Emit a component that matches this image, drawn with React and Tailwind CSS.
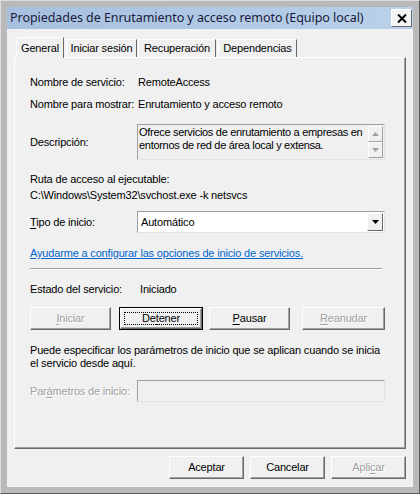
import React from 'react';

const font = { fontFamily: '"Liberation Sans", Arial, sans-serif' };

// classic raised 3D button
function Btn({ children, disabled, focused, className = '' }) {
  const face = (
    <div className="h-full w-full border border-t-white border-l-white border-r-[#696969] border-b-[#696969] shadow-[inset_-1px_-1px_0_#a0a0a0] bg-[#f0f0f0] flex items-center justify-center">
      {focused ? (
        <div className="h-[calc(100%-6px)] w-[calc(100%-6px)] border border-dotted border-black flex items-center justify-center">
          {children}
        </div>
      ) : (
        children
      )}
    </div>
  );
  return (
    <div
      className={`h-[23px] shrink-0 ${focused ? 'border border-black' : ''} ${
        disabled ? 'text-[#a0a0a0] [text-shadow:1px_1px_0_#fff]' : 'text-black'
      } ${className}`}
    >
      {face}
    </div>
  );
}

function U({ children }) {
  return <span className="underline underline-offset-2">{children}</span>;
}

function Arrow({ up, color = '#a0a0a0' }) {
  return (
    <svg width="7" height="4" viewBox="0 0 7 4">
      <path d={up ? 'M0 4 L3.5 0 L7 4 Z' : 'M0 0 L7 0 L3.5 4 Z'} fill={color} />
    </svg>
  );
}

function Row({ label, children, className = '' }) {
  return (
    <div className={`flex items-center ${className}`}>
      <div className="w-[107px] shrink-0 whitespace-nowrap">{label}</div>
      <div className="flex-1 min-w-0">{children}</div>
    </div>
  );
}

export default function App() {
  const tabs = [
    ['Iniciar sesión', 'w-[71px] ml-[2px]'],
    ['Recuperación', 'w-[78px] ml-[1px]'],
    ['Dependencias', 'w-[79px] ml-[2px]'],
  ];
  return (
    <div style={font} className="w-[420px] h-[494px] text-[11px] tracking-[-0.17px] text-black bg-[#b9b9b9] border border-t-[#dcdcdc] border-l-[#dcdcdc] border-r-[#5a5a5a] border-b-[#5a5a5a] p-[6px] flex flex-col">
      {/* title bar */}
      <div className="h-[22px] shrink-0 bg-gradient-to-r from-[#a7c0df] to-[#b9d1ea] flex items-center justify-between pl-[3px] pr-[1px]">
        <span style={{ fontFamily: '"Noto Sans", "Open Sans", sans-serif' }} className="text-[12.5px] text-[#1a1a3a] tracking-[-0.05px]">
          Propiedades de Enrutamiento y acceso remoto (Equipo local)
        </span>
        <div className="w-[21px] h-[18px] bg-[#f4f4f4] border border-t-white border-l-white border-r-[#696969] border-b-[#696969] flex items-center justify-center">
          <svg width="10" height="9" viewBox="0 0 10 9">
            <path d="M1 0.5 L9 8.5 M9 0.5 L1 8.5" stroke="#000" strokeWidth="2" />
          </svg>
        </div>
      </div>

      {/* client area */}
      <div className="flex-1 bg-[#f0f0f0] flex flex-col px-[7px] pt-[8px]">
        {/* tab strip */}
        <div className="flex items-end h-[20px] relative z-10">
          <div className="h-[21px] w-[48px] ml-[2px] -mb-[1px] bg-[#f0f0f0] border border-b-0 border-t-white border-l-white border-r-[#696969] flex items-center justify-center">
            General
          </div>
          {tabs.map(([t, cls]) => (
            <div
              key={t}
              className={`h-[18px] ${cls} border border-b-0 border-t-white border-l-white border-r-[#696969] flex items-center justify-center`}
            >
              {t}
            </div>
          ))}
        </div>

        {/* tab panel */}
        <div className="h-[392px] border border-t-white border-l-white border-r-[#696969] border-b-[#696969] shadow-[inset_-1px_-1px_0_#a0a0a0] pl-[15px] pr-[20px] pt-[17px] flex flex-col">
          <Row label="Nombre de servicio:" className="h-[14px]">
            <span className="pl-[1px]">RemoteAccess</span>
          </Row>
          <Row label="Nombre para mostrar:" className="h-[14px] mt-[8px]">
            <span className="pl-[1px]">Enrutamiento y acceso remoto</span>
          </Row>

          <Row label="Descripción:" className="mt-[13px]">
            <div className="h-[36px] border border-t-[#a0a0a0] border-l-[#a0a0a0] border-r-[#e3e3e3] border-b-[#e3e3e3] flex">
              <div className="flex-1 pl-[1px] pt-[1px] leading-[13px] tracking-[-0.3px]">
                Ofrece servicios de enrutamiento a empresas en entornos de red de área local y extensa.
              </div>
              <div className="w-[16px] flex flex-col py-[1px] pr-[1px]">
                <div className="h-[16px] border border-t-white border-l-white border-r-[#a0a0a0] border-b-[#a0a0a0] flex items-center justify-center">
                  <Arrow up />
                </div>
                <div className="h-[16px] border border-t-white border-l-white border-r-[#a0a0a0] border-b-[#a0a0a0] flex items-center justify-center">
                  <Arrow />
                </div>
              </div>
            </div>
          </Row>

          <div className="mt-[12px] leading-[14px]">Ruta de acceso al ejecutable:</div>
          <div className="mt-[2px] leading-[14px]">C:\Windows\System32\svchost.exe -k netsvcs</div>

          <Row label={<span><U>T</U>ipo de inicio:</span>} className="mt-[9px]">
            <div className="h-[22px] bg-white border border-t-[#a0a0a0] border-l-[#a0a0a0] border-r-[#e3e3e3] border-b-[#e3e3e3] flex items-center">
              <span className="flex-1 pl-[3px]">Automático</span>
              <div className="w-[16px] h-[18px] mr-[1px] bg-[#f0f0f0] border border-t-white border-l-white border-r-[#696969] border-b-[#696969] flex items-center justify-center">
                <Arrow color="#000" />
              </div>
            </div>
          </Row>

          <div className="mt-[13px] leading-[14px] text-[#0066cc] underline">
            Ayudarme a configurar las opciones de inicio de servicios.
          </div>

          <div className="mt-[8px] h-[2px] border-t border-t-[#a0a0a0] border-b border-b-white mr-[3px]" />

          <Row label="Estado del servicio:" className="mt-[12px] h-[14px]">
            <span className="pl-[3px]">Iniciado</span>
          </Row>

          <div className="mt-[11px] flex">
            <Btn disabled className="w-[81px]"><span><U>I</U>niciar</span></Btn>
            <Btn focused className="w-[84px] ml-[8px]"><span>De<U>t</U>ener</span></Btn>
            <Btn className="w-[81px] ml-[6px]"><span><U>P</U>ausar</span></Btn>
            <Btn disabled className="w-[83px] ml-[12px]"><span><U>R</U>eanudar</span></Btn>
          </div>

          <div className="mt-[14px] leading-[13px]">
            Puede especificar los parámetros de inicio que se aplican cuando se inicia el servicio desde aquí.
          </div>

          <Row
            label={<span className="text-[#a0a0a0] [text-shadow:1px_1px_0_#fff]">Par<U>á</U>metros de inicio:</span>}
            className="mt-[10px]"
          >
            <div className="h-[22px] bg-[#f0f0f0] border border-t-[#a0a0a0] border-l-[#a0a0a0] border-r-[#e3e3e3] border-b-[#e3e3e3]" />
          </Row>
        </div>

        {/* dialog buttons */}
        <div className="mt-[7px] flex justify-end gap-[6px]">
          <Btn className="w-[75px]">Aceptar</Btn>
          <Btn className="w-[75px]">Cancelar</Btn>
          <Btn disabled className="w-[75px]"><span>Apli<U>c</U>ar</span></Btn>
        </div>
      </div>
    </div>
  );
}
